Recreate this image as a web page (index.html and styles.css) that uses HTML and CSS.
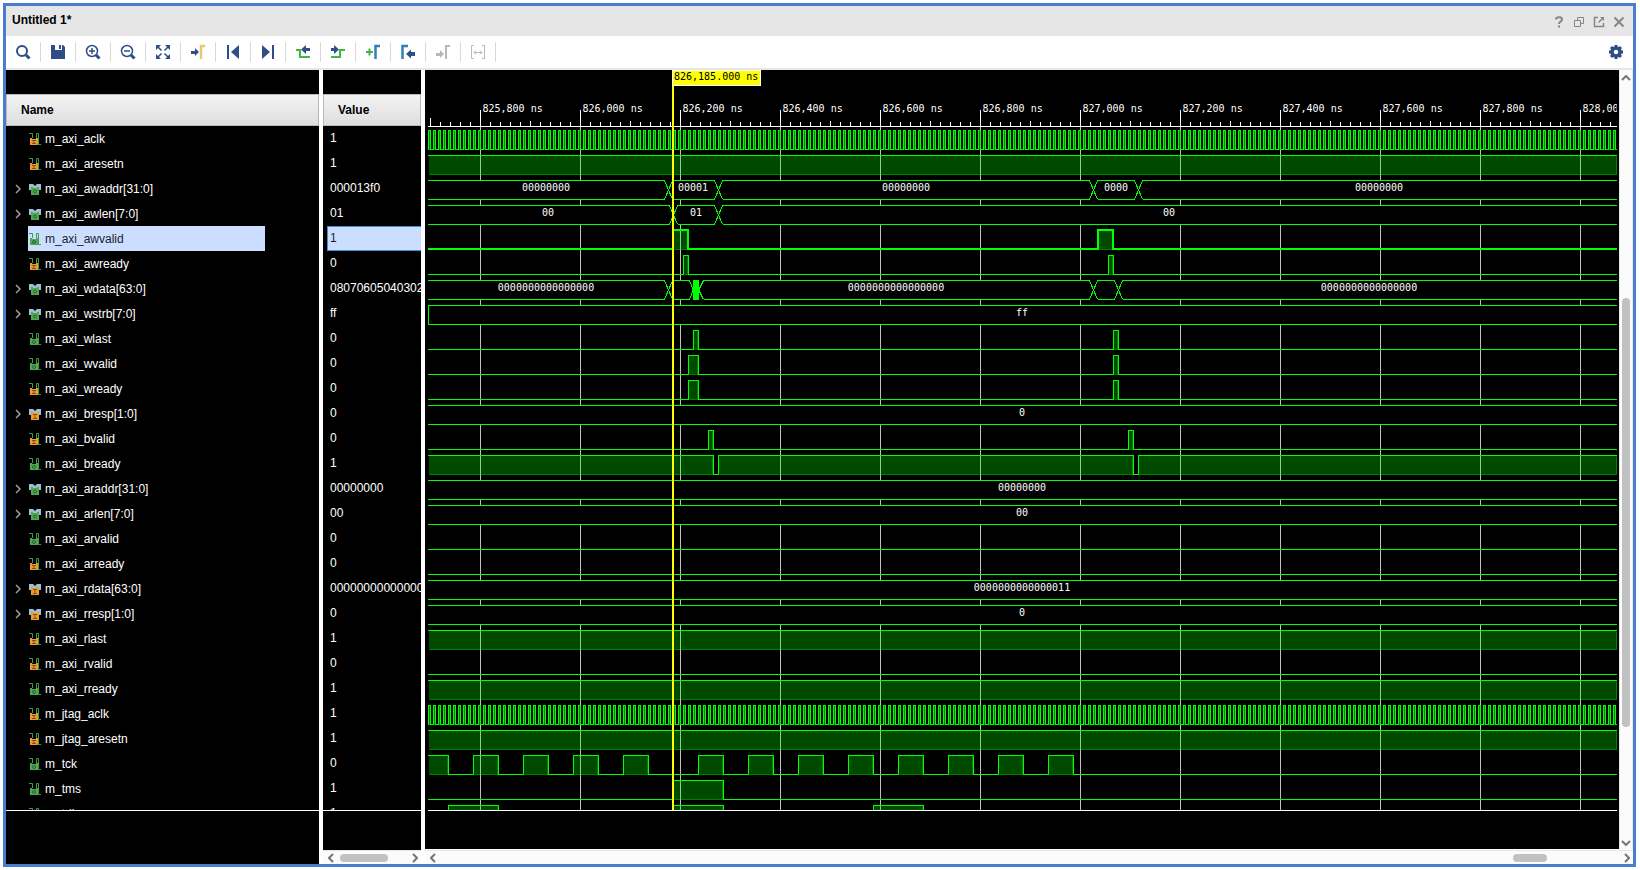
FILE: index.html
```html
<!DOCTYPE html>
<html lang="en">
<head>
    <meta charset="UTF-8">
    <meta name="viewport" content="width=device-width, initial-scale=1.0">
    <title>Untitled 1*</title>
    <link rel="stylesheet" href="styles.css">
</head>
<body>

    <svg class="sprite" aria-hidden="true">
        <symbol id="sig-in" viewBox="0 0 12 12">
            <path d="M0 .5h3.500V5M7.500 8V.5h2v11H12" fill="none" stroke="#3f9a4a"/>
            <path d="M1 5h2v1h4V5h2v7H1z" fill="#f09a2c"/>
            <path d="M3 7.500h4M3 10.500h4M5 7v4" stroke="#7a5420"/>
        </symbol>
        <symbol id="sig-out" viewBox="0 0 12 12">
            <path d="M0 .5h3.500V5M7.500 8V.5h2v11H12" fill="none" stroke="#3f9a4a"/>
            <path d="M1 5h2v1h4V5h2v7H1z" fill="#4ea850"/>
            <circle cx="5" cy="9" r="1.500" fill="none" stroke="#2a6330"/>
        </symbol>
        <symbol id="bus-in" viewBox="0 0 12 12">
            <path d="M0 1h4l2 2 2-2h4v6H9v2H3V7H0z" fill="#9dbfd6"/>
            <path d="M2 4h2v1h4V4h2v8H2z" fill="#f09a2c"/>
            <path d="M4 6.500h4M4 10.500h4M6 6v5" stroke="#7a5420"/>
        </symbol>
        <symbol id="bus-out" viewBox="0 0 12 12">
            <path d="M0 1h4l2 2 2-2h4v6H9v2H3V7H0z" fill="#9dbfd6"/>
            <path d="M2 4h2v1h4V4h2v8H2z" fill="#4ea850"/>
            <circle cx="6" cy="8.500" r="1.500" fill="none" stroke="#2a6330"/>
        </symbol>
    </svg>

    <main class="window">
        <header class="titlebar">
            <h1>Untitled 1*</h1>
            <div class="window-buttons">
                <button aria-label="Help">
                    <svg viewBox="0 0 12 12"><path d="M3 3.500C3 .6 9 .6 9 3.500 9 5.500 6 5.500 6 8M6 9.500v2" stroke-width="2"/></svg>
                </button>
                <button aria-label="Restore">
                    <svg viewBox="0 0 12 12"><path d="M4.500 4V1.500h6v6H8M1.500 4.500h6v6h-6z"/></svg>
                </button>
                <button aria-label="Float">
                    <svg viewBox="0 0 12 12"><path d="M5 1.500H1.500v9h9V7" stroke-width="1.500"/><path d="M5.500 6.500l4-4" stroke-width="1.500"/><path d="M7 1h4v4z" fill="#858585" stroke="none"/></svg>
                </button>
                <button aria-label="Close">
                    <svg viewBox="0 0 12 12"><path d="M1.500 1.500l9 9m0-9l-9 9" stroke-width="2"/></svg>
                </button>
            </div>
        </header>

        <div class="toolbar">
            <button aria-label="Search">
                <svg viewBox="0 0 16 16"><circle cx="7" cy="7" r="5" fill="none" stroke="currentColor" stroke-width="2"/><path d="M11 11l3.500 3.500" stroke="currentColor" stroke-width="3"/></svg>
            </button>
            <button aria-label="Save">
                <svg viewBox="0 0 16 16"><path d="M1 1h4v5h7V1h1l2 2v12H1zM9 1h2v4H9z" fill="currentColor"/></svg>
            </button>
            <button aria-label="Zoom in">
                <svg viewBox="0 0 16 16"><circle cx="7" cy="7" r="5.500" fill="none" stroke="currentColor" stroke-width="1.500"/><path d="M4 7h6M7 4v6" stroke="currentColor" stroke-width="1.500"/><path d="M11 11l3.500 3.500" stroke="currentColor" stroke-width="3"/></svg>
            </button>
            <button aria-label="Zoom out">
                <svg viewBox="0 0 16 16"><circle cx="7" cy="7" r="5.500" fill="none" stroke="currentColor" stroke-width="1.500"/><path d="M4 7h6" stroke="currentColor" stroke-width="1.500"/><path d="M11 11l3.500 3.500" stroke="currentColor" stroke-width="3"/></svg>
            </button>
            <button aria-label="Zoom fit">
                <svg viewBox="0 0 16 16"><path d="M1 1h5L1 6zM15 1v5l-5-5zM1 15v-5l5 5zM15 15h-5l5-5z" fill="currentColor"/><path d="M3 3l3.500 3.500M13 3L9.500 6.500M3 13l3.500-3.500M13 13L9.500 9.500" stroke="currentColor" stroke-width="1.500"/></svg>
            </button>
            <button aria-label="Go to cursor">
                <svg viewBox="0 0 16 16"><path d="M1 7h4V4l4 4-4 4V10H1z" fill="currentColor"/><path d="M11 15V2h4" fill="none" stroke="#e6cb6c" stroke-width="2.500"/></svg>
            </button>
            <button aria-label="Go to time 0">
                <svg viewBox="0 0 16 16"><path d="M2 1h2v14H2zM14 1v14L6 8z" fill="currentColor"/></svg>
            </button>
            <button aria-label="Go to last time">
                <svg viewBox="0 0 16 16"><path d="M2 1v14l8-7zM12 1h2v14h-2z" fill="currentColor"/></svg>
            </button>
            <button aria-label="Previous transition">
                <svg viewBox="0 0 16 16"><path d="M1 6h4v7h10" fill="none" stroke="#43b64a" stroke-width="2"/><path d="M15 4h-4V1L6 5.500l5 4.500V7h4z" fill="currentColor"/></svg>
            </button>
            <button aria-label="Next transition">
                <svg viewBox="0 0 16 16"><path d="M1 13h9V6h5" fill="none" stroke="#43b64a" stroke-width="2"/><path d="M1 4h3V1l5 4.500L4 10V7H1z" fill="currentColor"/></svg>
            </button>
            <button aria-label="Add marker">
                <svg viewBox="0 0 16 16"><path d="M1 8h7M4.500 4.500v7" stroke="#43b64a" stroke-width="2"/><path d="M10.500 15V2H15" fill="none" stroke="#2f80b8" stroke-width="2.500"/></svg>
            </button>
            <button aria-label="Previous marker">
                <svg viewBox="0 0 16 16"><path d="M2.500 15V2H8" fill="none" stroke="#2f80b8" stroke-width="2.500"/><path d="M15 8h-4V5.500L6 10l5 4.500V12h4z" fill="currentColor"/></svg>
            </button>
            <button aria-label="Next marker" disabled>
                <svg viewBox="0 0 16 16"><path d="M1 9h4V6l4 4-4 4v-2H1z" fill="currentColor"/><path d="M11 15V2h4" fill="none" stroke="currentColor" stroke-width="2"/></svg>
            </button>
            <button aria-label="Swap cursors" disabled>
                <svg viewBox="0 0 16 16"><path d="M4 1.500H1.500v13H4M12 1.500h2.500v13H12M4 8.500h8M6 6.500l-2 2 2 2M10 6.500l2 2-2 2" fill="none" stroke="currentColor"/></svg>
            </button>
            <button class="settings" aria-label="Settings">
                <svg viewBox="0 0 16 16"><circle cx="8" cy="8" r="4" fill="none" stroke="currentColor" stroke-width="3.500"/><path d="M8 1v3M8 12v3M1 8h3M12 8h3M3 3l2 2M11 11l2 2M13 3l-2 2M3 13l2-2" stroke="currentColor" stroke-width="3"/></svg>
            </button>
        </div>

        <div class="content">
            <section class="pane name-pane">
                <div class="list">
                    <table>
                        <thead><tr><th>Name</th></tr></thead>
                        <tbody id="names"></tbody>
                    </table>
                </div>
                <div class="pane-footer"></div>
            </section>

            <section class="pane value-pane">
                <div class="list">
                    <table>
                        <thead><tr><th>Value</th></tr></thead>
                        <tbody id="values"></tbody>
                    </table>
                </div>
                <div class="pane-footer"></div>
                <div class="scroll-h">
                    <button aria-label="Scroll left"><svg viewBox="0 0 6 10"><path d="M5 1L1 5l4 4"/></svg></button>
                    <div class="track"><div class="thumb value-thumb"></div></div>
                    <button aria-label="Scroll right"><svg viewBox="0 0 6 10"><path d="M1 1l4 4-4 4"/></svg></button>
                </div>
            </section>

            <section class="wave-pane">
                <div class="wave-row">
                    <div class="wave-view">
                        <div class="wave-box"><svg id="wave"></svg></div>
                    </div>
                    <div class="scroll-v">
                        <button aria-label="Scroll up"><svg viewBox="0 0 10 6"><path d="M1 5l4-4 4 4"/></svg></button>
                        <div class="track"><div class="thumb"></div></div>
                        <button aria-label="Scroll down"><svg viewBox="0 0 10 6"><path d="M1 1l4 4 4-4"/></svg></button>
                    </div>
                </div>
                <div class="scroll-h">
                    <button aria-label="Scroll left"><svg viewBox="0 0 6 10"><path d="M5 1L1 5l4 4"/></svg></button>
                    <div class="track"><div class="thumb wave-thumb"></div></div>
                    <button aria-label="Scroll right"><svg viewBox="0 0 6 10"><path d="M1 1l4 4-4 4"/></svg></button>
                </div>
            </section>
        </div>
    </main>

    <script src="script.js"></script>
</body>
</html>
```
FILE: styles.css
```css
* {
    box-sizing: border-box;
}

body {
    margin: 0;
    padding: 3px 4px 3px 3px;
    height: 100vh;
    background-color: #ffffff;
    color: #000000;
    font-family: "Liberation Sans", Arial, sans-serif;
    font-size: 12px;
}

.sprite {
    display: none;
}

button {
    display: flex;
    align-items: center;
    justify-content: center;
    padding: 0;
    border: none;
    background: none;
    cursor: pointer;
}

.window {
    height: 100%;
    display: flex;
    flex-direction: column;
    border: 3px solid #4a7dcf;
}

/* Title bar */
.titlebar {
    height: 30px;
    flex: none;
    display: flex;
    align-items: center;
    justify-content: space-between;
    padding: 0 4px 2px 6px;
    background-color: #e6e6e6;
}

.titlebar h1 {
    margin: 0;
    font-size: 12px;
}

.window-buttons {
    display: flex;
    padding-top: 4px;
}

.window-buttons button {
    width: 20px;
    height: 20px;
}

.window-buttons svg {
    width: 12px;
    height: 12px;
    fill: none;
    stroke: #858585;
}

/* Toolbar */
.toolbar {
    height: 34px;
    flex: none;
    display: flex;
    align-items: center;
    border-bottom: 2px solid #e6e6e6;
}

.toolbar button {
    width: 35px;
    height: 20px;
    border-right: 1px solid #d9d9d9;
    color: #2f4e87;
}

.toolbar button:disabled {
    color: #b8b8b8;
}

.toolbar svg {
    width: 16px;
    height: 16px;
}

.toolbar .settings {
    margin-left: auto;
    border: none;
}

/* Panes */
.content {
    flex: 1;
    min-height: 0;
    display: flex;
    gap: 4px;
}

.pane {
    flex: none;
    display: flex;
    flex-direction: column;
    padding-top: 24px;
    background-color: #000000;
}

.name-pane {
    width: 313px;
}

.value-pane {
    width: 98px;
}

.list {
    flex: 1;
    min-height: 0;
    overflow: hidden;
}

.pane-footer {
    height: 54px;
    flex: none;
    border-top: 1px solid #ffffff;
}

.value-pane .pane-footer {
    height: 40px;
}

table {
    width: 100%;
    border-spacing: 0;
    table-layout: fixed;
    color: #ffffff;
}

th {
    height: 32px;
    padding: 0 14px;
    border: 1px solid #b9b9b9;
    background: linear-gradient(#f3f3f3, #dedee0);
    color: #000000;
    text-align: left;
}

td {
    height: 25px;
    padding: 0;
    white-space: nowrap;
}

.signal {
    display: flex;
    align-items: center;
    padding-left: 8px;
}

.expander {
    width: 14px;
    height: 25px;
}

.expander svg {
    width: 6px;
    height: 10px;
    margin-right: 6px;
    fill: none;
    stroke: #a0a0a0;
    stroke-width: 1.5;
}

.label {
    width: 237px;
    height: 25px;
    display: flex;
    align-items: center;
    gap: 4px;
    padding-left: 1px;
}

.label svg {
    width: 12px;
    height: 12px;
}

.value {
    height: 25px;
    margin-left: 4px;
    padding-left: 3px;
    line-height: 25px;
    overflow: hidden;
}

.selected .label,
.selected .value {
    background-color: #ccdeff;
    color: #1c1c2c;
}

.selected .value {
    padding-left: 2px;
    border: 1px solid #3d94d1;
    border-right: none;
    line-height: 23px;
}

/* Waveform */
.wave-pane {
    flex: 1;
    min-width: 0;
    display: flex;
    flex-direction: column;
}

.wave-row {
    flex: 1;
    min-height: 0;
    display: flex;
    margin-bottom: 1px;
}

.wave-view {
    flex: 1;
    min-width: 0;
    padding: 0 2px 38px 3px;
    background-color: #000000;
}

.wave-box {
    height: 100%;
    border-bottom: 1px solid #ffffff;
}

#wave {
    display: block;
    width: 100%;
    height: 100%;
    font-family: "DejaVu Sans Mono", monospace;
    font-size: 10px;
    fill: none;
    shape-rendering: crispEdges;
}

#wave text {
    fill: #ffffff;
}

#wave .bus-label {
    text-anchor: middle;
}

.grid {
    stroke: #c0c0c0;
}

.ruler {
    stroke: #ffffff;
}

.line {
    stroke: #00ff00;
}

.line.thick {
    stroke-width: 2;
}

.high {
    fill: #00ff00;
    fill-opacity: 0.29;
    stroke: #00ff00;
    stroke-opacity: 0.3;
}

.clock-high {
    fill: #00ff00;
    fill-opacity: 0.5;
}

.gap {
    fill: #000000;
}

.busy {
    fill: #00ff00;
}

.cursor {
    fill: #ffff00;
}

.cursor-box {
    fill: #ffff00;
    stroke: #ffffff;
}

#wave .cursor-text {
    fill: #000000;
}

/* Scroll bars */
.scroll-h {
    height: 14px;
    flex: none;
    display: flex;
    align-items: center;
    padding-left: 2px;
    border-top: 1px solid #e6e6e6;
    background-color: #fbfbfb;
}

.scroll-v {
    width: 14px;
    flex: none;
    display: flex;
    flex-direction: column;
    align-items: center;
    padding-top: 2px;
    border: 1px solid #e6e6e6;
    border-width: 0 1px;
    background-color: #fbfbfb;
}

.scroll-h button {
    width: 12px;
    height: 13px;
}

.scroll-v button {
    width: 12px;
    height: 12px;
    flex: none;
}

.scroll-h svg {
    width: 6px;
    height: 10px;
}

.scroll-v svg {
    width: 10px;
    height: 6px;
}

.scroll-h svg,
.scroll-v svg {
    fill: none;
    stroke: #757575;
    stroke-width: 2;
}

.track {
    flex: 1;
    display: flex;
}

.thumb {
    height: 8px;
    border-radius: 4px;
    background-color: #c1c1c1;
}

.value-thumb {
    width: 48px;
    margin-left: 3px;
}

.wave-thumb {
    width: 34px;
    margin-left: auto;
    margin-right: 74px;
}

.scroll-v .track {
    flex-direction: column;
}

.scroll-v .thumb {
    width: 8px;
    height: 57%;
    margin-top: auto;
    margin-bottom: 110px;
}
```
FILE: script.js
```js
// All times are in ns after BASE
const BASE = 825000;
const START = 696;
const NS_PER_PX = 2;
const CURSOR = 1185;

const ROW = 25;
const FIRST_ROW = 56;
const HIGH = 4;
const LOW = 23;

// high: list of [from, to] where a 1-bit signal is 1
// bus: list of [end time, text], the last one runs to the edge
const ALWAYS = [[-Infinity, Infinity]];
const Z16 = '0'.repeat(16);

const signals = [
    { name: 'm_axi_aclk', icon: 'sig-in', value: '1', clock: true },
    { name: 'm_axi_aresetn', icon: 'sig-in', value: '1', high: ALWAYS },
    { name: 'm_axi_awaddr[31:0]', icon: 'bus-out', value: '000013f0', bus: [[1176, '00000000'], [1276, '00001'], [2026, '00000000'], [2116, '0000'], [Infinity, '00000000']] },
    { name: 'm_axi_awlen[7:0]', icon: 'bus-out', value: '01', bus: [[1186, '00'], [1276, '01'], [Infinity, '00']] },
    { name: 'm_axi_awvalid', icon: 'sig-out', value: '1', high: [[1186, 1216], [2036, 2066]], selected: true },
    { name: 'm_axi_awready', icon: 'sig-in', value: '0', high: [[1206, 1216], [2056, 2066]] },
    { name: 'm_axi_wdata[63:0]', icon: 'bus-out', value: '0807060504030201', bus: [[1176, Z16], [1226, ''], [1238, null], [2026, Z16], [2076, ''], [Infinity, Z16]] },
    { name: 'm_axi_wstrb[7:0]', icon: 'bus-out', value: 'ff', bus: [[Infinity, 'ff']], edge: true },
    { name: 'm_axi_wlast', icon: 'sig-out', value: '0', high: [[1226, 1236], [2066, 2076]] },
    { name: 'm_axi_wvalid', icon: 'sig-out', value: '0', high: [[1216, 1236], [2066, 2076]] },
    { name: 'm_axi_wready', icon: 'sig-in', value: '0', high: [[1216, 1236], [2066, 2076]] },
    { name: 'm_axi_bresp[1:0]', icon: 'bus-in', value: '0', bus: [[Infinity, '0']] },
    { name: 'm_axi_bvalid', icon: 'sig-in', value: '0', high: [[1256, 1266], [2096, 2106]] },
    { name: 'm_axi_bready', icon: 'sig-out', value: '1', high: [[-Infinity, 1266], [1276, 2106], [2116, Infinity]] },
    { name: 'm_axi_araddr[31:0]', icon: 'bus-out', value: '00000000', bus: [[Infinity, '00000000']] },
    { name: 'm_axi_arlen[7:0]', icon: 'bus-out', value: '00', bus: [[Infinity, '00']] },
    { name: 'm_axi_arvalid', icon: 'sig-out', value: '0', high: [] },
    { name: 'm_axi_arready', icon: 'sig-in', value: '0', high: [] },
    { name: 'm_axi_rdata[63:0]', icon: 'bus-in', value: '0000000000000011', bus: [[Infinity, '0000000000000011']] },
    { name: 'm_axi_rresp[1:0]', icon: 'bus-in', value: '0', bus: [[Infinity, '0']] },
    { name: 'm_axi_rlast', icon: 'sig-in', value: '1', high: ALWAYS },
    { name: 'm_axi_rvalid', icon: 'sig-in', value: '0', high: [] },
    { name: 'm_axi_rready', icon: 'sig-out', value: '1', high: ALWAYS },
    { name: 'm_jtag_aclk', icon: 'sig-in', value: '1', clock: true },
    { name: 'm_jtag_aresetn', icon: 'sig-in', value: '1', high: ALWAYS },
    { name: 'm_tck', icon: 'sig-out', value: '0', high: [[-Infinity, 736], [786, 836], [886, 936], [986, 1036], [1086, 1136], [1236, 1286], [1336, 1386], [1436, 1486], [1536, 1586], [1636, 1686], [1736, 1786], [1836, 1886], [1936, 1986]] },
    { name: 'm_tms', icon: 'sig-out', value: '1', high: [[1186, 1286]] },
    { name: 'm_tdi', icon: 'sig-out', value: '1', high: [[736, 836], [1186, 1286], [1586, 1686]] }
];

const toX = t => (t - START) / NS_PER_PX;

function fillTables() {
    let names = '';
    let values = '';
    for (const s of signals) {
        const cls = s.selected ? ' class="selected"' : '';
        const arrow = s.bus
            ? `<button class="expander" aria-label="Expand ${s.name}"><svg viewBox="0 0 6 10"><path d="M1 1l4 4-4 4"/></svg></button>`
            : '<span class="expander"></span>';
        names += `<tr${cls}><td><div class="signal">${arrow}<div class="label"><svg><use href="#${s.icon}"/></svg>${s.name}</div></div></td></tr>`;
        values += `<tr${cls}><td><div class="value">${s.value}</div></td></tr>`;
    }
    document.getElementById('names').innerHTML = names;
    document.getElementById('values').innerHTML = values;
}

function drawBits(s, top, width) {
    const off = s.selected ? 0 : 0.5;
    const hi = top + HIGH + off;
    const lo = top + LOW + off;
    let fills = '';
    let d = '';
    let open = false;
    for (const [from, to] of s.high) {
        const x0 = Math.max(toX(from), 0);
        const x1 = Math.min(toX(to), width);
        if (x0 > 0) {
            d += `${open ? 'L' : `M0 ${lo}L`}${x0 + off} ${lo}V${hi}`;
        } else {
            d += `M0 ${hi}`;
        }
        d += `H${x1 + off}`;
        if (x1 < width) d += `V${lo}`;
        open = true;
        fills += `<rect class="high" x="${x0 + 1.5}" y="${top + HIGH + 1.5}" width="${Math.max(x1 - x0 - 2, 1)}" height="${LOW - HIGH - 1}"/>`;
    }
    if (!open) d = `M0 ${lo}`;
    if (!open || toX(s.high[s.high.length - 1][1]) < width) d += `H${width}`;
    return `${fills}<path class="line${s.selected ? ' thick' : ''}" d="${d}"/>`;
}

function drawClock(top, width) {
    const hi = top + HIGH + 0.5;
    const lo = top + LOW + 0.5;
    let fills = '';
    let d = `M0 ${lo}`;
    for (let x = 0; x < width; x += 5) {
        d += `H${x + 0.5}V${hi}h2V${lo}`;
        fills += `<rect class="clock-high" x="${x + 1}" y="${top + HIGH}" width="1" height="${LOW - HIGH + 1}"/>`;
    }
    return `${fills}<path class="line" d="${d}H${width}"/>`;
}

function drawBus(s, top, width) {
    const hi = top + HIGH + 0.5;
    const lo = top + LOW + 0.5;
    let out = `<rect class="gap" x="0" y="${top + HIGH}" width="${width}" height="${LOW - HIGH + 1}"/>`;
    let d = '';
    let labels = '';
    let x0 = 0;
    s.bus.forEach(([end, text], i) => {
        const x1 = Math.min(toX(end), width);
        const a = i === 0 ? 0 : x0 + 4.5;
        const b = x1 === width ? width : x1 - 3.5;
        if (text === null) {
            out += `<rect class="busy" x="${x0}" y="${top + HIGH}" width="${x1 - x0}" height="${LOW - HIGH + 1}"/>`;
        } else {
            d += `M${a} ${hi}H${b}M${a} ${lo}H${b}`;
            labels += `<text class="bus-label" x="${Math.floor((a + b) / 2)}" y="${top + 15}">${text}</text>`;
        }
        if (x1 < width) {
            // half crossings next to a busy block, a full one anywhere else
            const next = s.bus[i + 1][1];
            if (next === null) {
                d += `M${b} ${hi}L${x1} ${hi + 9}M${b} ${lo}L${x1} ${lo - 9}`;
            } else if (text === null) {
                d += `M${x1} ${hi + 9}L${x1 + 4.5} ${hi}M${x1} ${lo - 9}L${x1 + 4.5} ${lo}`;
            } else {
                d += `M${b} ${hi}L${x1 + 4.5} ${lo}M${b} ${lo}L${x1 + 4.5} ${hi}`;
            }
        }
        x0 = x1;
    });
    if (s.edge) d += `M0.5 ${hi}V${lo}`;
    return `${out}<path class="line" d="${d}"/>${labels}`;
}

function drawRuler(width) {
    let d = `M0 56.5H${width}M2.5 48V56`;
    let labels = '';
    for (let t = 700; toX(t) < width; t += 20) {
        const x = toX(t) + 0.5;
        if (t % 200 === 0) {
            d += `M${x} 40V57`;
            const text = (BASE + t).toLocaleString('en-US') + ' ns';
            labels += `<text x="${x + 2}" y="42">${text}</text>`;
        } else {
            d += `M${x} ${t % 100 === 0 ? 51 : 52}V56`;
        }
    }
    return `<path class="ruler" d="${d}"/>${labels}`;
}

function drawWave() {
    const svg = document.getElementById('wave');
    const width = svg.clientWidth;
    const height = svg.clientHeight;
    let grid = '';
    for (let t = 800; toX(t) < width; t += 200) {
        grid += `M${toX(t) + 0.5} 57V${height}`;
    }
    let out = `<path class="grid" d="${grid}"/>`;
    signals.forEach((s, i) => {
        const top = FIRST_ROW + i * ROW;
        if (s.clock) out += drawClock(top, width);
        else if (s.bus) out += drawBus(s, top, width);
        else out += drawBits(s, top, width);
    });
    out += drawRuler(width);

    const x = Math.floor(toX(CURSOR));
    out += `<rect class="cursor" x="${x}" y="0" width="2" height="${height}"/>`;
    out += `<rect class="cursor-box" x="${x + 0.5}" y="0.5" width="88" height="15"/>`;
    out += `<text class="cursor-text" x="${x + 2}" y="10">826,185.000 ns</text>`;
    svg.innerHTML = out;
}

fillTables();
drawWave();
window.addEventListener('resize', drawWave);
```
